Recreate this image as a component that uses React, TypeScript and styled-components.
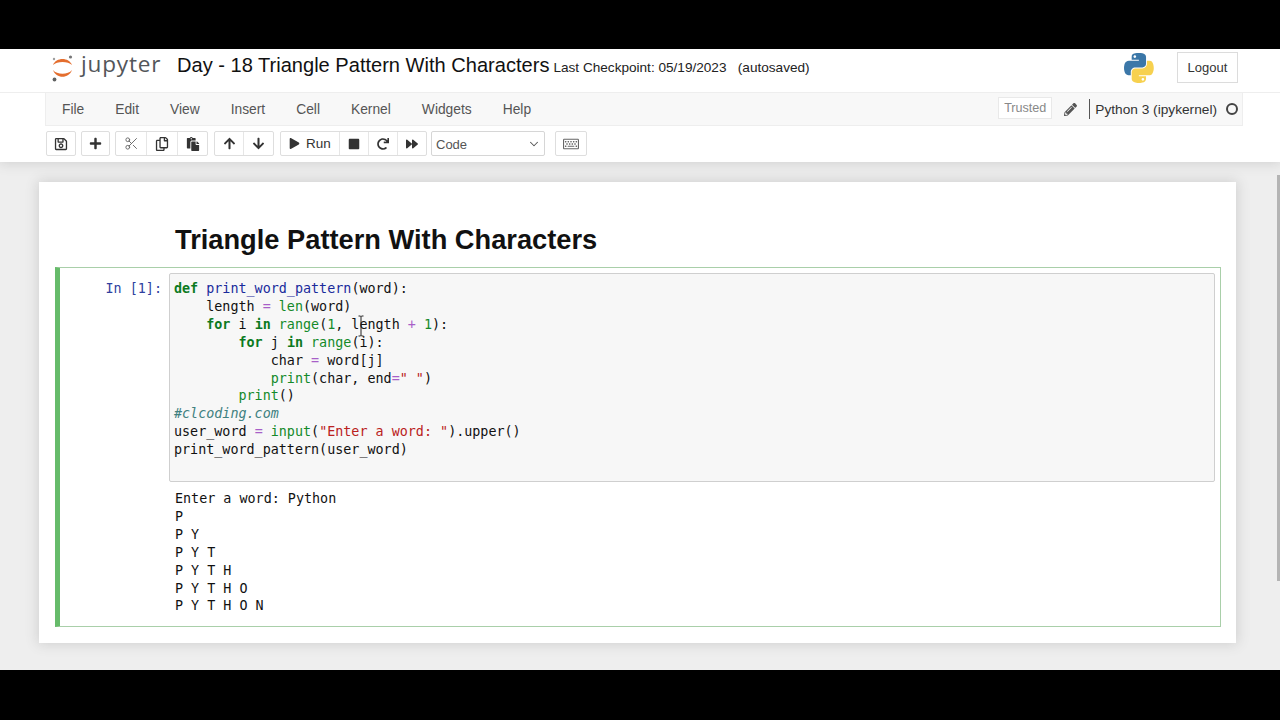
import React from 'react';
import styled, { createGlobalStyle } from 'styled-components';
import { ChevronDown, Scissors } from 'lucide-react';
import {
  FaRegSave,
  FaPlus,
  FaRegCopy,
  FaPaste,
  FaArrowUp,
  FaArrowDown,
  FaPlay,
  FaStop,
  FaRedo,
  FaForward,
  FaRegKeyboard,
  FaPencilAlt,
} from 'react-icons/fa';

const GlobalStyle = createGlobalStyle`
  html, body {
    margin: 0;
    padding: 0;
    background: #000;
    overflow: hidden;
  }
  body {
    font-family: "Liberation Sans", Arial, sans-serif;
  }
`;

const Frame = styled.div`
  width: 1280px;
  height: 720px;
  display: flex;
  flex-direction: column;
  background: #000;
`;

const LetterBox = styled.div<{ $height: number }>`
  height: ${(p) => p.$height}px;
  flex: none;
  background: #000;
`;

const Screen = styled.div`
  position: relative;
  flex: 1;
  min-height: 0;
  display: flex;
  flex-direction: column;
  background: #eeeeee;
  overflow: hidden;
`;

const Header = styled.header`
  flex: none;
  height: 113px;
  background: #fff;
  box-shadow: 0 0 12px 1px rgba(87, 87, 87, 0.2);
  display: flex;
  flex-direction: column;
  position: relative;
`;

const TitleBar = styled.div`
  height: 44px;
  flex: none;
  box-sizing: border-box;
  display: flex;
  align-items: center;
  padding: 0 42px 6px 50px;
  border-bottom: 1px solid #eeeeee;
`;

const LogoMark = styled.svg`
  width: 25px;
  height: 30px;
  flex: none;
`;

const LogoText = styled.span`
  font-family: "Open Sans", sans-serif;
  font-size: 22.6px;
  line-height: 1.25;
  letter-spacing: 0.8px;
  color: #53565a;
  margin: -7px 0 0 6px;
  width: 91px;
`;

const NotebookName = styled.span`
  font-size: 20.07px;
  color: #111;
  margin: -5px 0 0 5px;
  white-space: nowrap;
`;

const Checkpoint = styled.span`
  font-size: 13.6px;
  color: #222;
  margin: 0 0 0 4px;
  white-space: pre;
`;

const RightSide = styled.div`
  margin-left: auto;
  display: flex;
  align-items: center;
  gap: 23px;
`;

const PythonLogo = styled.svg`
  width: 30px;
  height: 30px;
`;

const LogoutButton = styled.div`
  width: 59px;
  height: 29px;
  border: 1px solid #dcdcdc;
  color: #333;
  font-size: 13px;
  display: flex;
  align-items: center;
  justify-content: center;
`;

const MenuBar = styled.nav`
  height: 32px;
  flex: none;
  margin: 0 37px 0 45px;
  padding: 0 4px 0 16px;
  background: #f8f8f8;
  border: 1px solid #eeeeee;
  border-top: 0;
  display: flex;
  align-items: center;
  gap: 31px;
`;

const MenuItem = styled.span`
  font-size: 13.8px;
  color: #555;
`;

const KernelStatus = styled.div`
  margin-left: auto;
  display: flex;
  align-items: center;
`;

const TrustedTag = styled.span`
  width: 52px;
  height: 20px;
  margin-top: -2px;
  border: 1px solid #e9e9e9;
  background: #fff;
  color: #888;
  font-size: 12.6px;
  display: flex;
  align-items: center;
  justify-content: center;
`;

const PencilSlot = styled.span`
  width: 37px;
  display: flex;
  justify-content: center;
  color: #555;
  font-size: 13px;
`;

const KernelName = styled.span`
  border-left: 1px solid #555;
  height: 20px;
  padding-left: 5px;
  display: flex;
  align-items: center;
  font-size: 13.7px;
  color: #333;
  white-space: nowrap;
`;

const KernelDot = styled.span`
  width: 12px;
  height: 12px;
  box-sizing: border-box;
  border: 2px solid #444;
  border-radius: 50%;
  margin-left: 9px;
`;

const ToolBar = styled.div`
  margin: 5px 0 0 46px;
  height: 25px;
  display: flex;
  align-items: stretch;
`;

const ButtonGroup = styled.div<{ $gap: number }>`
  display: flex;
  margin-right: ${(p) => p.$gap}px;
  border: 1px solid #dedede;
  border-radius: 2px;
  background: #fff;
  & > * + * {
    border-left: 1px solid #e6e6e6;
  }
`;

const ToolButton = styled.div<{ $width: number; $faded?: boolean }>`
  width: ${(p) => p.$width}px;
  display: flex;
  align-items: center;
  justify-content: center;
  gap: 6px;
  font-size: 13.5px;
  color: ${(p) => (p.$faded ? '#666' : '#333')};
`;

const CellTypeSelect = styled.div`
  width: 114px;
  box-sizing: border-box;
  margin-right: 10px;
  border: 1px solid #d6d6d6;
  border-radius: 2px;
  background: #fff;
  display: flex;
  align-items: center;
  justify-content: space-between;
  padding: 1px 3px 0 4px;
  font-size: 13px;
  color: #555;
`;

const Notebook = styled.main`
  flex: 1;
  padding: 20px 44px 0 39px;
`;

const Page = styled.div`
  height: 461px;
  box-sizing: border-box;
  background: #fff;
  box-shadow: 0 0 12px 1px rgba(87, 87, 87, 0.2);
  padding: 42px 15px 0 16px;
`;

const Heading = styled.h1`
  margin: 0 0 12px 120px;
  height: 31px;
  line-height: 31px;
  font-size: 27.25px;
  font-weight: 700;
  color: #111;
`;

const Cell = styled.section`
  height: 360px;
  box-sizing: border-box;
  border: 1px solid #a9cfa9;
  border-left: 5px solid #66bb6a;
  padding: 5px 5px 0 0;
`;

const InputRow = styled.div`
  display: flex;
`;

const Prompt = styled.div`
  width: 102px;
  flex: none;
  text-align: right;
  padding-top: 7px;
  font-family: "DejaVu Sans Mono", monospace;
  font-size: 13.4px;
  line-height: 18px;
  color: #303f9f;
`;

const CodeBox = styled.pre`
  position: relative;
  flex: 1;
  height: 209px;
  box-sizing: border-box;
  margin: 0 0 0 7px;
  padding: 6px 4px;
  background: #f7f7f7;
  border: 1px solid #cfcfcf;
  border-radius: 2px;
  font-family: "DejaVu Sans Mono", monospace;
  font-size: 13.4px;
  line-height: 17.9px;
  color: #111;
`;

const tokenColors = {
  kw: 'color: #0b7a1e; font-weight: 700;',
  fn: 'color: #1a2b9c;',
  bi: 'color: #148a2a;',
  op: 'color: #a85fc8;',
  num: 'color: #148a2a;',
  str: 'color: #ba2121;',
  com: 'color: #408080; font-style: italic;',
};

const Token = styled.span<{ $kind: keyof typeof tokenColors }>`
  ${(p) => tokenColors[p.$kind]}
`;

const TextCursor = styled.svg`
  position: absolute;
  left: 187px;
  top: 41px;
  width: 8px;
  height: 22px;
`;

const Output = styled.pre`
  margin: 8px 0 0 115px;
  font-family: "DejaVu Sans Mono", monospace;
  font-size: 13.4px;
  line-height: 17.9px;
  color: #111;
`;

const ScrollThumb = styled.div`
  position: absolute;
  right: 0;
  top: 126px;
  width: 3px;
  height: 406px;
  background: #b4b4b4;
`;

const menu = ['File', 'Edit', 'View', 'Insert', 'Cell', 'Kernel', 'Widgets', 'Help'];

const App: React.FC = () => (
  <Frame>
    <GlobalStyle />
    <LetterBox $height={49} />
    <Screen>
      <Header>
        <TitleBar>
          <LogoMark viewBox="0 0 25 30">
            <path d="M3 12 C6 4 19 4 22 12 C18 8 7 8 3 12Z" fill="#e46e2e" />
            <path d="M3 17 C6 26 19 26 22 17 C18 22 7 22 3 17Z" fill="#e46e2e" />
            <circle cx="20.5" cy="4" r="1.6" fill="#767677" />
            <circle cx="4" cy="6" r="1.2" fill="#9e9e9e" />
            <circle cx="4.5" cy="26.5" r="1.9" fill="#616262" />
          </LogoMark>
          <LogoText>jupyter</LogoText>
          <NotebookName>Day - 18 Triangle Pattern With Characters</NotebookName>
          <Checkpoint>Last Checkpoint: 05/19/2023   (autosaved)</Checkpoint>
          <RightSide>
            <PythonLogo viewBox="0 0 112 112">
              <path
                fill="#3b77a8"
                d="M54.919 0c-4.584.022-8.961.413-12.812 1.095C30.76 3.1 28.7 7.298 28.7 15.032V25.25h26.813v3.406H18.638c-7.793 0-14.616 4.684-16.75 13.594-2.462 10.213-2.571 16.586 0 27.25 1.906 7.938 6.457 13.594 14.25 13.594h9.219V70.844c0-8.85 7.657-16.656 16.75-16.656h26.781c7.455 0 13.406-6.138 13.406-13.625V15.032c0-7.266-6.13-12.725-13.406-13.937C64.282.328 59.502-.02 54.918 0zM40.418 8.22c2.77 0 5.031 2.298 5.031 5.125 0 2.816-2.262 5.094-5.031 5.094-2.78 0-5.031-2.278-5.031-5.094 0-2.827 2.251-5.125 5.031-5.125z"
              />
              <path
                fill="#f7d14f"
                d="M85.638 28.657v11.906c0 9.231-7.826 17-16.75 17H42.106c-7.336 0-13.406 6.278-13.406 13.625v25.532c0 7.266 6.319 11.54 13.406 13.625 8.488 2.496 16.627 2.947 26.781 0 6.75-1.954 13.406-5.888 13.406-13.625V86.5H55.513v-3.405h40.187c7.793 0 10.696-5.436 13.406-13.594 2.8-8.399 2.68-16.476 0-27.25-1.926-7.757-5.604-13.594-13.406-13.594zM70.575 93.32c2.78 0 5.031 2.278 5.031 5.094 0 2.827-2.251 5.125-5.031 5.125-2.77 0-5.031-2.298-5.031-5.125 0-2.816 2.261-5.094 5.031-5.094z"
              />
            </PythonLogo>
            <LogoutButton>Logout</LogoutButton>
          </RightSide>
        </TitleBar>
        <MenuBar>
          {menu.map((label) => (
            <MenuItem key={label}>{label}</MenuItem>
          ))}
          <KernelStatus>
            <TrustedTag>Trusted</TrustedTag>
            <PencilSlot>
              <FaPencilAlt />
            </PencilSlot>
            <KernelName>Python 3 (ipykernel)</KernelName>
            <KernelDot />
          </KernelStatus>
        </MenuBar>
        <ToolBar>
          <ButtonGroup $gap={5}>
            <ToolButton $width={28}>
              <FaRegSave size={14} />
            </ToolButton>
          </ButtonGroup>
          <ButtonGroup $gap={5}>
            <ToolButton $width={27}>
              <FaPlus size={13} />
            </ToolButton>
          </ButtonGroup>
          <ButtonGroup $gap={6}>
            <ToolButton $width={30} $faded>
              <Scissors size={15} strokeWidth={1.5} />
            </ToolButton>
            <ToolButton $width={30}>
              <FaRegCopy size={14} />
            </ToolButton>
            <ToolButton $width={29}>
              <FaPaste size={14} />
            </ToolButton>
          </ButtonGroup>
          <ButtonGroup $gap={6}>
            <ToolButton $width={28}>
              <FaArrowUp size={13} />
            </ToolButton>
            <ToolButton $width={29}>
              <FaArrowDown size={13} />
            </ToolButton>
          </ButtonGroup>
          <ButtonGroup $gap={4}>
            <ToolButton $width={58}>
              <FaPlay size={11} />
              <span>Run</span>
            </ToolButton>
            <ToolButton $width={28}>
              <FaStop size={12} />
            </ToolButton>
            <ToolButton $width={28}>
              <FaRedo size={12} />
            </ToolButton>
            <ToolButton $width={28}>
              <FaForward size={12} />
            </ToolButton>
          </ButtonGroup>
          <CellTypeSelect>
            <span>Code</span>
            <ChevronDown size={14} strokeWidth={1.8} />
          </CellTypeSelect>
          <ButtonGroup $gap={0}>
            <ToolButton $width={30} $faded>
              <FaRegKeyboard size={16} />
            </ToolButton>
          </ButtonGroup>
        </ToolBar>
      </Header>
      <Notebook>
        <Page>
          <Heading>Triangle Pattern With Characters</Heading>
          <Cell>
            <InputRow>
              <Prompt>In [1]:</Prompt>
              <CodeBox>
                <Token $kind="kw">def</Token> <Token $kind="fn">print_word_pattern</Token>(word):{'\n'}
                {'    '}length <Token $kind="op">=</Token> <Token $kind="bi">len</Token>(word){'\n'}
                {'    '}<Token $kind="kw">for</Token> i <Token $kind="kw">in</Token> <Token $kind="bi">range</Token>(<Token $kind="num">1</Token>, length <Token $kind="op">+</Token> <Token $kind="num">1</Token>):{'\n'}
                {'        '}<Token $kind="kw">for</Token> j <Token $kind="kw">in</Token> <Token $kind="bi">range</Token>(i):{'\n'}
                {'            '}char <Token $kind="op">=</Token> word[j]{'\n'}
                {'            '}<Token $kind="bi">print</Token>(char, end<Token $kind="op">=</Token><Token $kind="str">" "</Token>){'\n'}
                {'        '}<Token $kind="bi">print</Token>(){'\n'}
                <Token $kind="com">#clcoding.com</Token>{'\n'}
                user_word <Token $kind="op">=</Token> <Token $kind="bi">input</Token>(<Token $kind="str">"Enter a word: "</Token>).upper(){'\n'}
                print_word_pattern(user_word)
                <TextCursor viewBox="0 0 8 22">
                  <path d="M1.5 1h2l.5.6.5-.6h2M4 1.5v19M1.5 21h2l.5-.6.5.6h2" fill="none" stroke="#222" strokeWidth="1" />
                </TextCursor>
              </CodeBox>
            </InputRow>
            <Output>
              {'Enter a word: Python\nP \nP Y \nP Y T \nP Y T H \nP Y T H O \nP Y T H O N '}
            </Output>
          </Cell>
        </Page>
      </Notebook>
      <ScrollThumb />
    </Screen>
    <LetterBox $height={50} />
  </Frame>
);

export default App;
